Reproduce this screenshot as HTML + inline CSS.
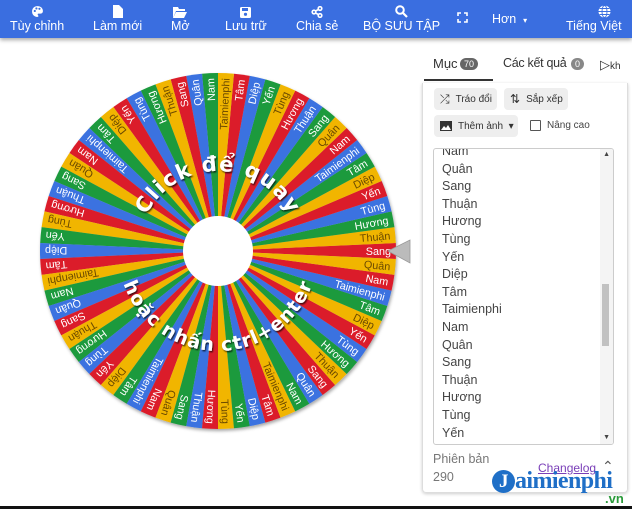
<!DOCTYPE html>
<html><head><meta charset="utf-8">
<style>
*{box-sizing:border-box;margin:0;padding:0}
body{width:632px;height:509px;overflow:hidden;background:#fff;font-family:"Liberation Sans",Arial,sans-serif;position:relative}
.top{position:absolute;left:0;top:0;width:632px;height:38px;background:#3a6ee0;box-shadow:0 2px 4px rgba(0,0,0,.35);color:#fff;font-size:12.5px}
.it{position:absolute;top:1px;text-align:center;white-space:nowrap}
.it .ic{height:17px;display:flex;justify-content:center;align-items:flex-end}
.it .tx{margin-top:1px}
.panel{position:absolute;left:422px;top:83px;width:206px;height:410px;border:1px solid #ddd;border-top:none;border-radius:0 0 4px 4px;box-shadow:0 1px 3px rgba(0,0,0,.2)}
.tabs{position:absolute;left:422px;top:54px;font-size:13px;color:#333}
.btn{position:absolute;background:#eee;border-radius:4px;font-size:10px;color:#333;display:flex;align-items:center;gap:6px;padding-left:6px;height:22px}
.list{position:absolute;left:433px;top:148px;width:181px;height:297px;border:1px solid #ccc;border-radius:3px;overflow:hidden;font-size:12.5px;color:#444}
.list div{position:absolute;left:8px;height:17.6px}
</style></head><body>
<div class="top">
 <div class="it" style="left:10px"><div class="ic"><svg width="13" height="13" viewBox="0 0 12 12"><path d="M6 1C3 1 1 3 1 6s2 5 5 5c1 0 1-1 .5-1.5S6 8 7 8h1.5C10 8 11 7 11 5.5 11 3 9 1 6 1z" fill="#fff"/><circle cx="3.5" cy="5.5" r="1" fill="#3a6ee0"/><circle cx="5" cy="3.2" r="1" fill="#3a6ee0"/><circle cx="7.8" cy="3.5" r="1" fill="#3a6ee0"/></svg></div><div class="tx">Tùy chỉnh</div></div>
 <div class="it" style="left:93px"><div class="ic"><svg width="10" height="13"><path d="M0 0h6l4 4v9H0z" fill="#fff"/></svg></div><div class="tx">Làm mới</div></div>
 <div class="it" style="left:171px"><div class="ic"><svg width="14" height="11"><path d="M0 0h5l1 2h6v2H3L0 11z" fill="#fff"/><path d="M3 5h11l-3 6H0z" fill="#fff"/></svg></div><div class="tx">Mở</div></div>
 <div class="it" style="left:225px"><div class="ic"><svg width="11" height="11"><rect width="11" height="11" rx="1.5" fill="#fff"/><rect x="2" y="1" width="6" height="3" fill="#3a6ee0"/><circle cx="5.5" cy="7.3" r="1.6" fill="#3a6ee0"/></svg></div><div class="tx">Lưu trữ</div></div>
 <div class="it" style="left:296px"><div class="ic"><svg width="12" height="12"><g fill="none" stroke="#fff" stroke-width="1.6"><circle cx="9" cy="2.5" r="1.8"/><circle cx="3" cy="6" r="1.8"/><circle cx="9" cy="9.5" r="1.8"/><path d="M4.6 5l3-1.7M4.6 7l3 1.7"/></g></svg></div><div class="tx">Chia sẻ</div></div>
 <div class="it" style="left:363px"><div class="ic"><svg width="13" height="13"><circle cx="5" cy="5" r="3.8" fill="none" stroke="#fff" stroke-width="2"/><path d="M8 8l4 4" stroke="#fff" stroke-width="2.2"/></svg></div><div class="tx">BỘ SƯU TẬP</div></div>
 <div class="it" style="left:457px;top:12px"><svg width="11" height="11" fill="none" stroke="#fff" stroke-width="1.6"><path d="M1 4V1h3M7 1h3v3M10 7v3H7M4 10H1V7"/></svg></div>
 <div class="it" style="left:492px;top:12px">Hơn &nbsp;<span style="font-size:8px">▾</span></div>
 <div class="it" style="left:587px"><div class="ic"><svg width="13" height="13"><circle cx="6.5" cy="6.5" r="6" fill="#fff"/><g stroke="#3a6ee0" stroke-width=".9" fill="none"><ellipse cx="6.5" cy="6.5" rx="2.5" ry="6"/><path d="M.5 6.5h12M1.5 3.5h10M1.5 9.5h10"/></g></svg></div><div class="tx" style="margin-left:-21px">Tiếng Việt</div></div>
</div>

<svg id="wheel" style="position:absolute;left:0;top:0" width="420" height="509"></svg>

<div class="tabs">
 <span style="position:absolute;left:11px;top:2px">Mục</span>
 <span style="position:absolute;left:38px;top:4px;background:#666;color:#fff;font-size:9px;border-radius:7px;padding:1px 4px">70</span>
 <span style="position:absolute;left:81px;top:2px;white-space:nowrap;font-size:12.5px;letter-spacing:-.3px">Các kết quả</span>
 <span style="position:absolute;left:149px;top:4px;background:#888;color:#fff;font-size:9px;border-radius:7px;padding:1px 4px">0</span>
 <span style="position:absolute;left:178px;top:3px;white-space:nowrap">▷<span style="font-size:10px">kh</span></span>
 <div style="position:absolute;left:2px;top:25px;width:69px;height:2px;background:#333"></div>
</div>
<div class="panel"></div>
<div class="btn" style="left:434px;top:88px;width:63px"><span style="font-size:12px">⤮</span>Tráo đổi</div>
<div class="btn" style="left:504px;top:88px;width:64px"><span style="font-size:12px">⇅</span>Sắp xếp</div>
<div class="btn" style="left:434px;top:115px;width:84px"><svg width="12" height="10"><rect width="12" height="10" fill="#333"/><path d="M1 9l3-4 2 2 2-3 3 5z" fill="#fff"/></svg>Thêm ảnh &nbsp;▾</div>
<div style="position:absolute;left:530px;top:120px;width:11px;height:11px;border:1.5px solid #555;border-radius:1px"></div>
<div style="position:absolute;left:547px;top:120px;font-size:10px;color:#444">Nâng cao</div>
<div class="list" id="list">
 <div style="right:0;left:auto;top:0;width:13px;height:100%;background:#f4f4f4"></div>
 <div style="left:auto;right:4px;top:135px;width:7px;height:62px;background:#c1c1c1"></div>
 <div style="left:auto;right:3px;top:2px;font-size:7px">▲</div>
 <div style="left:auto;right:3px;top:285px;font-size:7px">▼</div>
</div>
<div style="position:absolute;left:433px;top:452px;font-size:12.5px;color:#777">Phiên bản</div>
<div style="position:absolute;left:433px;top:470px;font-size:12.5px;color:#777">290</div>
<div style="position:absolute;left:538px;top:461px;font-size:12px;color:#7a3fb8;text-decoration:underline">Changelog</div>
<div style="position:absolute;left:602px;top:458px;font-size:14px;color:#555">⌃</div>
<div style="position:absolute;left:492px;top:468px;font-family:'Liberation Serif',serif;font-weight:bold;font-size:24px;color:#1f6fc7;letter-spacing:-.6px"><span style="display:inline-block;width:23px;height:23px;border-radius:50%;background:#1f6fc7;color:#fff;font-size:19px;text-align:center;line-height:23px;vertical-align:1px">J</span>aimienphi</div>
<div style="position:absolute;left:605px;top:491px;font-size:13px;font-weight:bold;color:#2a9a3a">.vn</div>
<div style="position:absolute;left:0;top:506px;width:632px;height:3px;background:#111"></div>

<script>
const names=["Nam","Quân","Sang","Thuận","Hương","Tùng","Yến","Diệp","Tâm","Taimienphi"];
const L=document.getElementById('list');
const start=-5;
for(let k=0;k<17;k++){const d=document.createElement('div');d.style.top=(start+k*17.6)+'px';d.textContent=names[k%10];L.appendChild(d);}
const cx=218,cy=251,R=178,N=70,step=2*Math.PI/N;
const cols=["#db1f2c","#f1b500","#1a9a3c","#3a72e0"];
let s='<defs><filter id="sh"><feDropShadow dx="1" dy="2" stdDeviation="1.5" flood-opacity=".35"/></filter><filter id="ts"><feDropShadow dx="1" dy="1.5" stdDeviation="0.8" flood-opacity=".7"/></filter></defs><g filter="url(#sh)">';
for(let i=0;i<N;i++){
 const a0=-i*step-step/2,a1=a0+step;
 const x0=cx+R*Math.cos(a0),y0=cy+R*Math.sin(a0),x1=cx+R*Math.cos(a1),y1=cy+R*Math.sin(a1);
 s+=`<path d="M${cx} ${cy}L${x0.toFixed(2)} ${y0.toFixed(2)}A${R} ${R} 0 0 1 ${x1.toFixed(2)} ${y1.toFixed(2)}Z" fill="${cols[i%4]}"/>`;
}
s+='</g>';
for(let i=0;i<N;i++){
 const deg=-i*360/N, c=i%4==1?"#6b4a00":"#fff";
 s+=`<text transform="translate(${cx} ${cy}) rotate(${deg.toFixed(3)})" x="${R-5}" y="3.8" text-anchor="end" font-size="10.8" fill="${c}" font-family="Liberation Sans,sans-serif">${names[(2+i)%10]}</text>`;
}
s+=`<circle cx="${cx}" cy="${cy}" r="35" fill="#fff"/>`;
s+=`<path id="up" d="M${cx-80} ${cy} A80 80 0 0 1 ${cx+80} ${cy}" fill="none"/>`;
s+=`<path id="dn" d="M${cx-100} ${cy} A100 100 0 0 0 ${cx+100} ${cy}" fill="none"/>`;
s+=`<text font-size="21" font-weight="bold" fill="#fff" filter="url(#ts)" letter-spacing="1.5" font-family="DejaVu Sans,sans-serif"><textPath href="#up" startOffset="50%" text-anchor="middle">Click để quay</textPath></text>`;
s+=`<text font-size="19" font-weight="bold" fill="#fff" filter="url(#ts)" letter-spacing="1" font-family="DejaVu Sans,sans-serif"><textPath href="#dn" startOffset="50%" text-anchor="middle">hoặc nhấn ctrl+enter</textPath></text>`;
s+=`<path d="M388 251L410 240V263Z" fill="#bbb" stroke="#999" stroke-width=".8"/>`;
document.getElementById('wheel').innerHTML=s;
</script>
</body></html>
